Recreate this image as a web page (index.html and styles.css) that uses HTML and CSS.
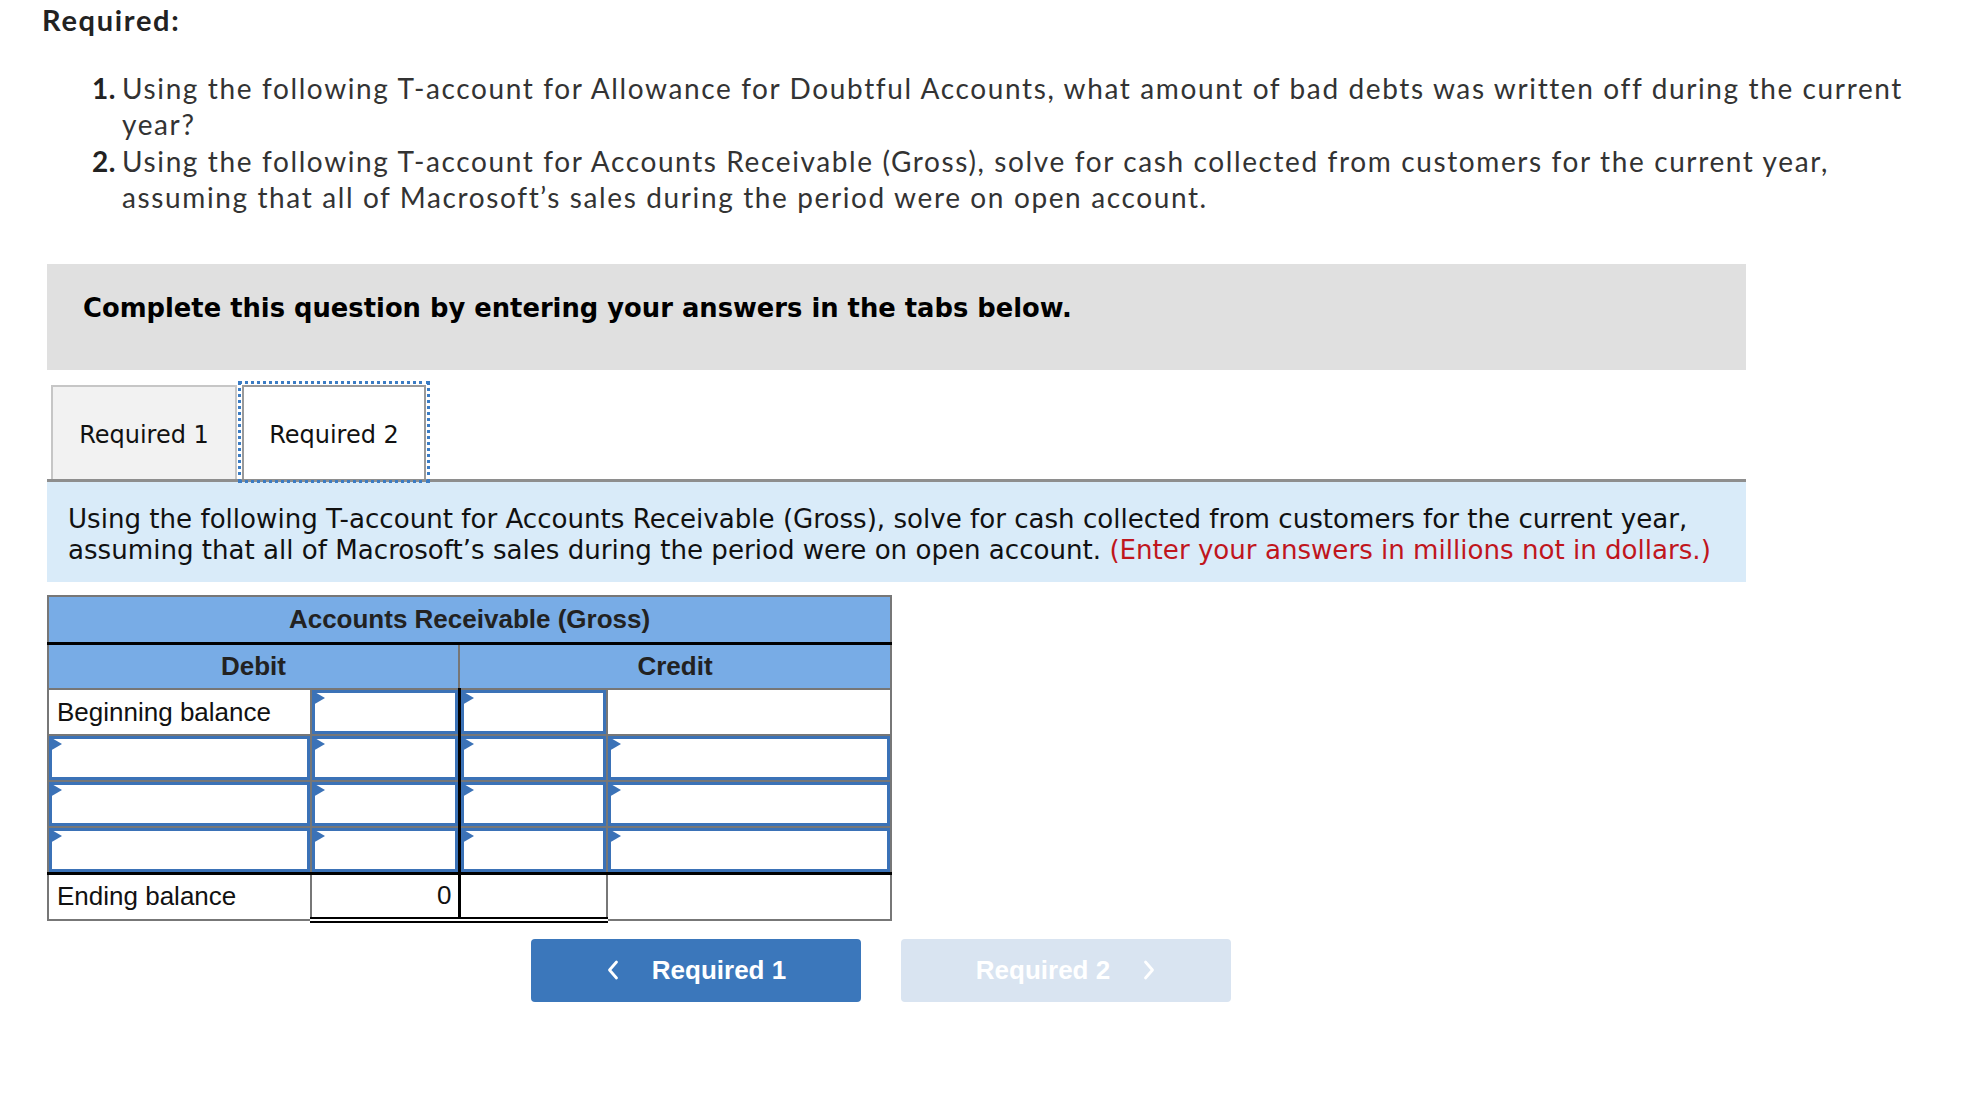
FILE: index.html
```html
<!DOCTYPE html>
<html lang="en">
<head>
<meta charset="utf-8">
<title>Required</title>
<link rel="stylesheet" href="styles.css">
</head>
<body>
<div class="page">
  <h2 class="req-title">Required:</h2>
  <ol class="req-list">
    <li><span class="num">1.</span><span class="txt">Using the following T-account for Allowance for Doubtful Accounts, what amount of bad debts was written off during the current year?</span></li>
    <li><span class="num">2.</span><span class="txt">Using the following T-account for Accounts Receivable (Gross), solve for cash collected from customers for the current year, assuming that all of Macrosoft’s sales during the period were on open account.</span></li>
  </ol>

  <div class="question">
    <div class="instructions">Complete this question by entering your answers in the tabs below.</div>

    <div class="tabs">
      <div class="tab">Required 1</div>
      <div class="tab active">Required 2</div>
    </div>

    <div class="prompt">Using the following T-account for Accounts Receivable (Gross), solve for cash collected from customers for the current year, assuming that all of Macrosoft’s sales during the period were on open account. <span class="note">(Enter your answers in millions not in dollars.)</span></div>

    <table class="taccount">
      <colgroup>
        <col class="c-label"><col class="c-amt"><col class="c-amt"><col class="c-clabel">
      </colgroup>
      <thead>
        <tr class="title-row"><th colspan="4">Accounts Receivable (Gross)</th></tr>
        <tr class="side-row"><th colspan="2" class="debit">Debit</th><th colspan="2">Credit</th></tr>
      </thead>
      <tbody>
        <tr>
          <td class="label">Beginning balance</td>
          <td class="dr"><div class="inp"><input type="text"></div></td>
          <td><div class="inp"><input type="text"></div></td>
          <td class="empty"></td>
        </tr>
        <tr>
          <td><div class="inp"><input type="text"></div></td>
          <td class="dr"><div class="inp"><input type="text"></div></td>
          <td><div class="inp"><input type="text"></div></td>
          <td><div class="inp"><input type="text"></div></td>
        </tr>
        <tr>
          <td><div class="inp"><input type="text"></div></td>
          <td class="dr"><div class="inp"><input type="text"></div></td>
          <td><div class="inp"><input type="text"></div></td>
          <td><div class="inp"><input type="text"></div></td>
        </tr>
        <tr>
          <td><div class="inp"><input type="text"></div></td>
          <td class="dr"><div class="inp"><input type="text"></div></td>
          <td><div class="inp"><input type="text"></div></td>
          <td><div class="inp"><input type="text"></div></td>
        </tr>
        <tr class="end-row">
          <td class="label">Ending balance</td>
          <td class="dr total">0</td>
          <td class="total"></td>
          <td class="empty"></td>
        </tr>
      </tbody>
    </table>

    <div class="nav">
      <button class="nav-btn prev" type="button">
        <svg class="chev" width="14" height="22" viewBox="0 0 14 22"><path d="M10.5 3 L3.5 11 L10.5 19" fill="none" stroke="#fff" stroke-width="2.8" stroke-linecap="round" stroke-linejoin="round"/></svg>
        <span>Required 1</span>
      </button>
      <button class="nav-btn next" type="button" disabled>
        <span>Required 2</span>
        <svg class="chev" width="14" height="22" viewBox="0 0 14 22"><path d="M3.5 3 L10.5 11 L3.5 19" fill="none" stroke="#fff" stroke-width="2.8" stroke-linecap="round" stroke-linejoin="round"/></svg>
      </button>
    </div>
  </div>
</div>
</body>
</html>
```

FILE: styles.css
```css
* { box-sizing: border-box; }

html, body {
  margin: 0;
  padding: 0;
  background: #fff;
}

.page {
  padding: 2px 0 0 0;
  font-family: Lato, "Open Sans", sans-serif;
  color: #333;
}

.req-title {
  margin: 0 0 0 42px;
  font-family: Lato, sans-serif;
  font-weight: 700;
  font-size: 29px;
  line-height: 36px;
  color: #222;
  letter-spacing: 1.7px;
}

.req-list {
  list-style: none;
  margin: 32px 0 0 0;
  padding: 0 30px 0 80px;
  font-size: 28px;
  line-height: 36.3px;
  letter-spacing: 1.62px;
}

.req-list li {
  display: flex;
}

.req-list .num {
  flex: 0 0 42px;
  text-align: right;
  padding-right: 6px;
  font-weight: 700;
  color: #222;
  letter-spacing: 0.5px;
}

.req-list .txt {
  flex: 1;
}

.question {
  margin: 49px 0 0 47px;
  width: 1699px;
}

.instructions {
  background: #e0e0e0;
  padding: 31px 36px 49px;
  font-family: "DejaVu Sans", sans-serif;
  font-weight: 700;
  font-size: 25.8px;
  line-height: 26px;
  color: #000;
}

.tabs {
  display: flex;
  gap: 5px;
  margin-top: 15px;
  padding-left: 4px;
  border-bottom: 3px solid #8e8e8e;
}

.tab {
  height: 94px;
  display: flex;
  align-items: center;
  justify-content: center;
  padding-top: 3px;
  font-family: "DejaVu Sans", sans-serif;
  font-size: 24px;
  color: #111;
  border: 2px solid #c6c6c6;
  border-bottom: none;
  background: #f2f2f2;
  width: 186px;
}

.tab.active {
  background: #fff;
  border-color: #9a9a9a;
  width: 184px;
  outline: 3px dotted #3b7cc4;
  outline-offset: 1px;
}

.prompt {
  background: #d9ebf9;
  padding: 22px 21px 16px;
  font-family: "DejaVu Sans", sans-serif;
  font-size: 26.1px;
  line-height: 31px;
  color: #111;
}

.prompt .note {
  color: #c0161d;
}

.taccount {
  margin-top: 13px;
  width: 843px;
  table-layout: fixed;
  border-collapse: collapse;
  font-family: "Liberation Sans", Arial, sans-serif;
  font-size: 26px;
  color: #111;
  border: 2px solid #777;
}

.c-label { width: 263px; }
.c-amt { width: 148px; }
.c-clabel { width: 284px; }

.taccount th {
  background: #78ace6;
  font-weight: 700;
  color: #222;
  padding: 0;
  text-align: center;
}

.title-row th {
  height: 47px;
  border-bottom: 3px solid #000;
}

.side-row th {
  height: 46px;
  border: 2px solid #777;
  border-top: 3px solid #000;
}

.taccount td {
  height: 46px;
  padding: 0;
  border: 2px solid #777;
  background: #fff;
}

.taccount td.label {
  padding-left: 8px;
  white-space: nowrap;
}

.taccount td.dr {
  border-right: 3px solid #000;
}

.inp {
  position: relative;
  height: 44px;
}

.inp input {
  display: block;
  width: 100%;
  height: 100%;
  margin: 0;
  padding: 0 8px;
  border: 3px solid #3b72b7;
  background: #fff;
  font: inherit;
  outline: none;
}

.inp::before {
  content: "";
  position: absolute;
  left: 1px;
  top: 1px;
  width: 0;
  height: 0;
  border-top: 7.5px solid transparent;
  border-bottom: 7.5px solid transparent;
  border-left: 12px solid #3b72b7;
  z-index: 1;
}

.end-row td {
  border-top: 3px solid #000;
}

.end-row td.total {
  border-bottom: 6px double #000;
  text-align: right;
  padding-right: 6px;
}

.nav {
  display: flex;
  gap: 40px;
  margin-top: 16px;
  padding-left: 484px;
}

.nav-btn {
  width: 330px;
  height: 63px;
  border: none;
  border-radius: 4px;
  display: flex;
  align-items: center;
  justify-content: center;
  gap: 32px;
  font-family: "Liberation Sans", Arial, sans-serif;
  font-weight: 700;
  font-size: 26px;
  color: #fff;
  background: #3b77bb;
  padding: 0;
}

.nav-btn.next {
  background: #d9e4f1;
  color: #fff;
}
```
